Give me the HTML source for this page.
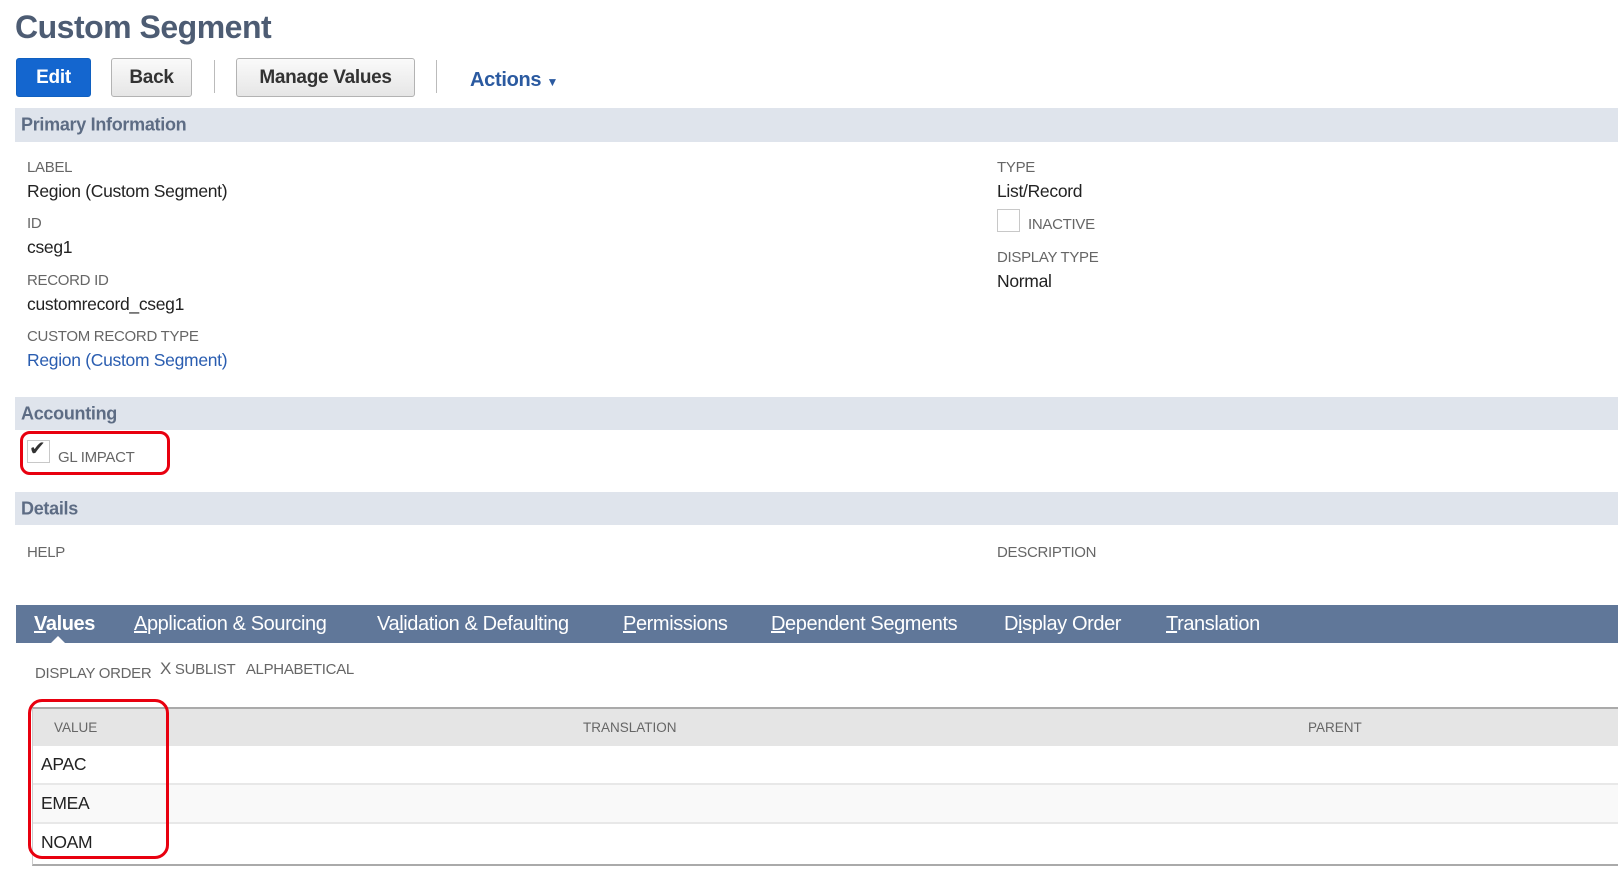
<!DOCTYPE html>
<html><head><meta charset="utf-8"><style>
*{margin:0;padding:0;box-sizing:border-box}
body{width:1618px;height:895px;background:#fff;font-family:"Liberation Sans",sans-serif;position:relative;overflow:hidden;color:#222}
.a{position:absolute;white-space:nowrap}
.lbl{font-size:15px;color:#666;letter-spacing:-0.3px}
.val{font-size:17.5px;color:#222;letter-spacing:-0.3px}
.bar{position:absolute;left:15px;right:0;background:#dfe4ec}
.bar span{position:absolute;left:6px;top:50%;transform:translateY(-50%);font-weight:bold;font-size:18px;color:#5d6c84;letter-spacing:-0.3px}
.btn{position:absolute;top:58px;height:39px;border:1px solid #b3b3b3;border-radius:3px;background:linear-gradient(#fafafa,#e6e6e6);font-weight:bold;font-size:19px;color:#333;text-align:center;line-height:37px;letter-spacing:-0.3px}
.sep{position:absolute;top:60px;width:1px;height:33px;background:#bbb}
.tab{position:absolute;top:613px;font-size:20px;color:#fff;letter-spacing:-0.4px}
.red{position:absolute;border:3px solid #e8000f;border-radius:10px}
.cb{position:absolute;width:23px;height:23px;border:1px solid #c8c8c8;background:#fff}
</style></head><body>
<div class="a" style="left:15px;top:9px;font-size:32px;font-weight:bold;color:#4d5c73;letter-spacing:-0.5px">Custom Segment</div>
<div class="btn" style="left:16px;width:75px;background:#1466cf;border-color:#1060c0;color:#fff">Edit</div>
<div class="btn" style="left:111px;width:81px">Back</div>
<div class="sep" style="left:214px"></div>
<div class="btn" style="left:236px;width:179px">Manage Values</div>
<div class="sep" style="left:436px"></div>
<div class="a" style="left:470px;top:69px;font-size:20px;font-weight:bold;color:#2b5aa0;letter-spacing:-0.3px">Actions <span style="font-size:12px">▼</span></div>

<div class="bar" style="top:108px;height:34px"><span>Primary Information</span></div>
<div class="a lbl" style="left:27px;top:159px">LABEL</div>
<div class="a val" style="left:27px;top:181px">Region (Custom Segment)</div>
<div class="a lbl" style="left:27px;top:215px">ID</div>
<div class="a val" style="left:27px;top:237px">cseg1</div>
<div class="a lbl" style="left:27px;top:272px">RECORD ID</div>
<div class="a val" style="left:27px;top:294px">customrecord_cseg1</div>
<div class="a lbl" style="left:27px;top:328px">CUSTOM RECORD TYPE</div>
<div class="a val" style="left:27px;top:350px;color:#2a5db0">Region (Custom Segment)</div>

<div class="a lbl" style="left:997px;top:159px">TYPE</div>
<div class="a val" style="left:997px;top:181px">List/Record</div>
<div class="cb" style="left:997px;top:209px"></div>
<div class="a lbl" style="left:1028px;top:216px">INACTIVE</div>
<div class="a lbl" style="left:997px;top:249px">DISPLAY TYPE</div>
<div class="a val" style="left:997px;top:271px">Normal</div>

<div class="bar" style="top:397px;height:33px"><span>Accounting</span></div>
<div class="cb" style="left:27px;top:440px"></div>
<div class="a" style="left:29px;top:436px;font-size:20px;color:#333">✔</div>
<div class="a lbl" style="left:58px;top:449px">GL IMPACT</div>
<div class="red" style="left:20px;top:431px;width:150px;height:44px"></div>

<div class="bar" style="top:492px;height:33px"><span>Details</span></div>
<div class="a lbl" style="left:27px;top:544px">HELP</div>
<div class="a lbl" style="left:997px;top:544px">DESCRIPTION</div>

<div style="position:absolute;left:16px;right:0;top:605px;height:38px;background:#607799"></div>
<div class="a" style="left:51px;top:636px;width:0;height:0;border-left:7px solid transparent;border-right:7px solid transparent;border-bottom:7px solid #fff"></div>
<div class="tab" style="left:34px;font-weight:bold"><u>V</u>alues</div>
<div class="tab" style="left:134px"><u>A</u>pplication &amp; Sourcing</div>
<div class="tab" style="left:377px">Va<u>l</u>idation &amp; Defaulting</div>
<div class="tab" style="left:623px"><u>P</u>ermissions</div>
<div class="tab" style="left:771px"><u>D</u>ependent Segments</div>
<div class="tab" style="left:1004px">D<u>i</u>splay Order</div>
<div class="tab" style="left:1166px"><u>T</u>ranslation</div>

<div class="a lbl" style="left:35px;top:665px">DISPLAY ORDER</div>
<div class="a lbl" style="left:160px;top:659px"><span style="font-size:17px">X</span> SUBLIST &nbsp; ALPHABETICAL</div>

<div style="position:absolute;left:32px;right:0;top:707px;height:159px;border-top:2px solid #aaa;border-bottom:2px solid #aaa;border-left:1px solid #ccc">
 <div style="height:37px;background:#e5e5e5;position:relative">
  <div class="a" style="left:21px;top:11px;font-size:13.5px;color:#666">VALUE</div>
  <div class="a" style="left:550px;top:11px;font-size:13.5px;color:#666">TRANSLATION</div>
  <div class="a" style="left:1275px;top:11px;font-size:13.5px;color:#666">PARENT</div>
 </div>
 <div style="height:39px;border-bottom:2px solid #e8e8e8;position:relative"><div class="a val" style="left:8px;top:8px">APAC</div></div>
 <div style="height:39px;border-bottom:2px solid #e8e8e8;background:#f9f9f9;position:relative"><div class="a val" style="left:8px;top:8px">EMEA</div></div>
 <div style="height:38px;position:relative"><div class="a val" style="left:8px;top:8px">NOAM</div></div>
</div>
<div class="red" style="left:28px;top:699px;width:141px;height:160px;border-radius:14px"></div>
</body></html>
